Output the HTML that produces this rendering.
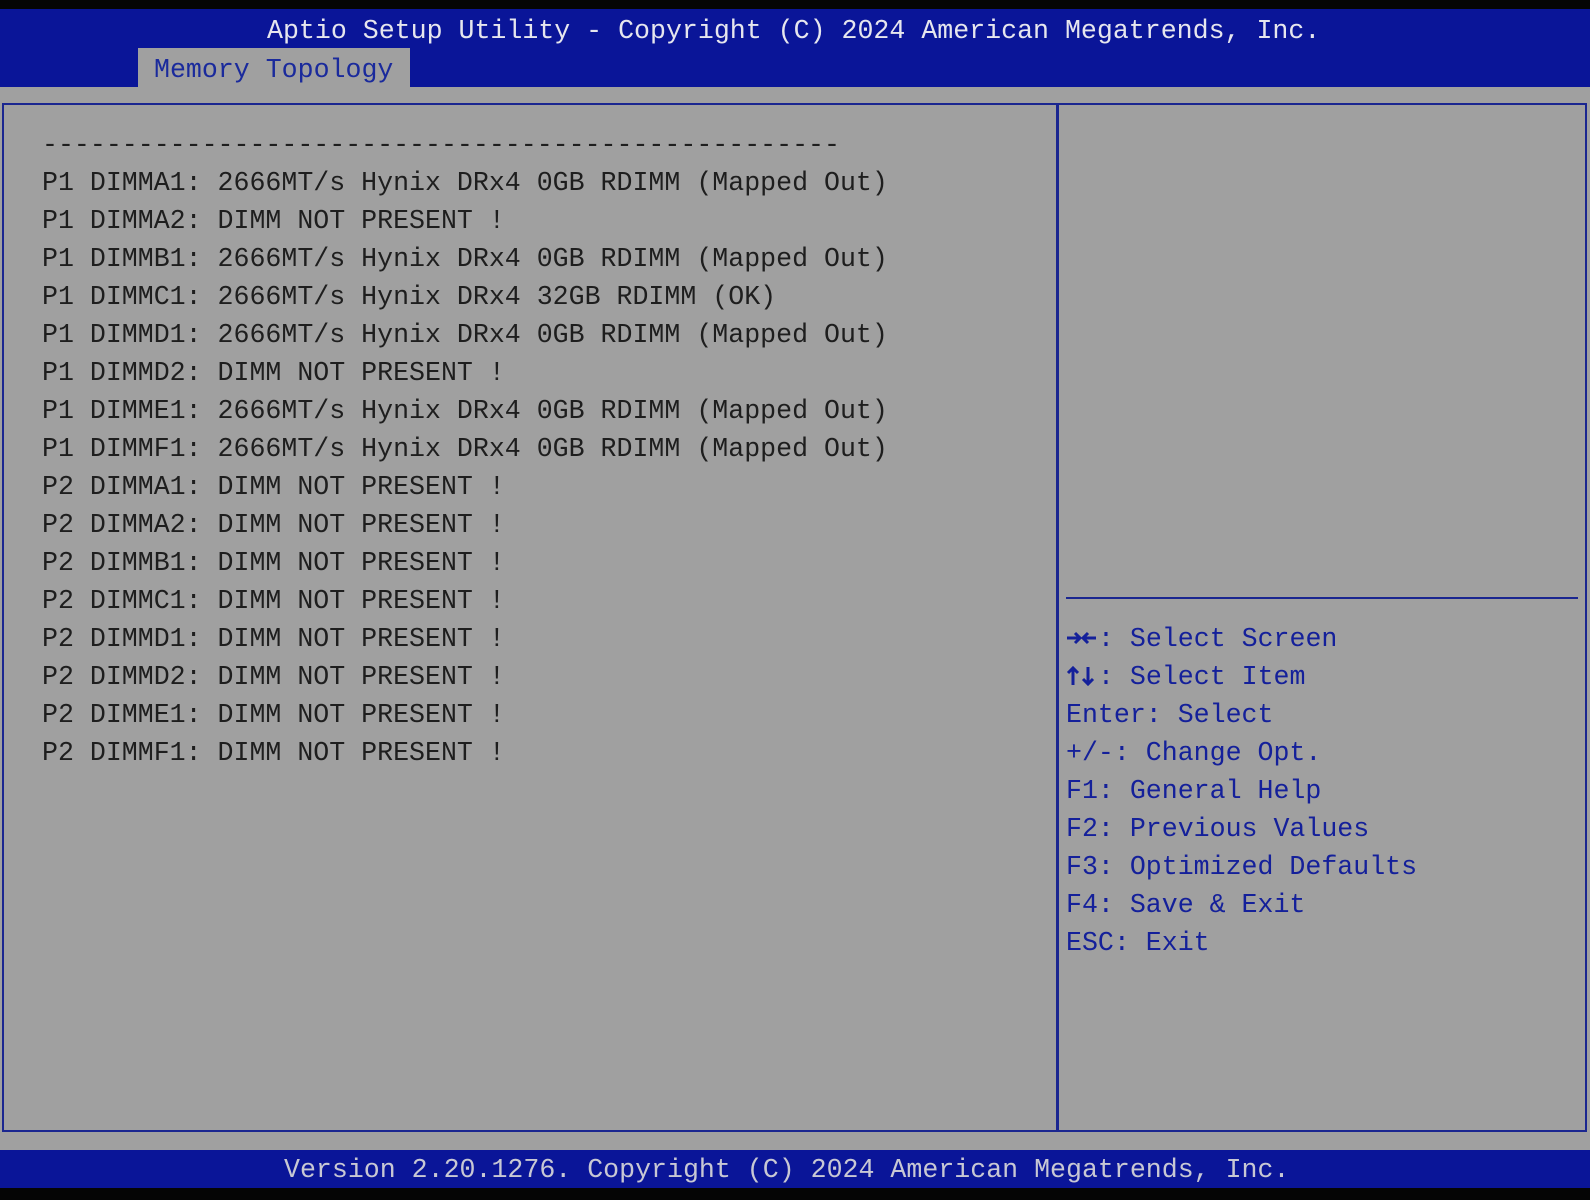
<!DOCTYPE html>
<html><head><meta charset="utf-8"><style>
html,body{margin:0;padding:0;width:1590px;height:1200px;overflow:hidden;background:#a0a0a0;}
*{box-sizing:border-box;}
.t{position:absolute;font-family:"Liberation Mono","DejaVu Sans Mono",monospace;font-size:26.6px;white-space:pre;line-height:38px;}
#top{position:absolute;left:0;top:0;width:1590px;height:9px;background:#050505;}
#hdr{position:absolute;left:0;top:9px;width:1590px;height:78px;background:#0a1598;}
#tab{position:absolute;left:138px;top:48px;width:272px;height:39px;background:#a0a0a0;}
#box{position:absolute;left:2px;top:103px;width:1585px;height:1029px;border:2px solid #1a2690;}
#vdiv{position:absolute;left:1056px;top:104px;width:3px;height:1027px;background:#1a2690;}
#hdiv{position:absolute;left:1066px;top:597px;width:512px;height:2px;background:#1a2690;}
#ftr{position:absolute;left:0;top:1150px;width:1590px;height:38px;background:#0a1598;}
#bot{position:absolute;left:0;top:1188px;width:1590px;height:12px;background:#050505;}
.main{color:#1e1e1e;left:42px;}
.help{color:#14209a;left:1066px;}
.ic{display:inline-block;width:32px;height:20px;vertical-align:-2px;}
</style></head><body>
<div id="top"></div>
<div id="hdr"></div>
<div id="tab"></div>
<div class="t" style="left:267px;top:12px;color:#e6e6ee;font-size:26.6px;">Aptio Setup Utility - Copyright (C) 2024 American Megatrends, Inc.</div>
<div class="t" style="left:154px;top:51px;color:#1a2a9c;font-size:26.6px;">Memory Topology</div>
<div id="box"></div>
<div id="vdiv"></div>
<div id="hdiv"></div>
<div class="t main" style="top:126px;">--------------------------------------------------</div>
<div class="t main" style="top:164px;">P1 DIMMA1: 2666MT/s Hynix DRx4 0GB RDIMM (Mapped Out)
P1 DIMMA2: DIMM NOT PRESENT !
P1 DIMMB1: 2666MT/s Hynix DRx4 0GB RDIMM (Mapped Out)
P1 DIMMC1: 2666MT/s Hynix DRx4 32GB RDIMM (OK)
P1 DIMMD1: 2666MT/s Hynix DRx4 0GB RDIMM (Mapped Out)
P1 DIMMD2: DIMM NOT PRESENT !
P1 DIMME1: 2666MT/s Hynix DRx4 0GB RDIMM (Mapped Out)
P1 DIMMF1: 2666MT/s Hynix DRx4 0GB RDIMM (Mapped Out)
P2 DIMMA1: DIMM NOT PRESENT !
P2 DIMMA2: DIMM NOT PRESENT !
P2 DIMMB1: DIMM NOT PRESENT !
P2 DIMMC1: DIMM NOT PRESENT !
P2 DIMMD1: DIMM NOT PRESENT !
P2 DIMMD2: DIMM NOT PRESENT !
P2 DIMME1: DIMM NOT PRESENT !
P2 DIMMF1: DIMM NOT PRESENT !</div>
<div class="t help" style="top:620px;"><svg class="ic" viewBox="0 0 32 20"><g fill="none" stroke="#14209a" stroke-width="3"><path d="M1 10H13M9 5l5 5-5 5"/><path d="M17 10H30M22 5l-5 5 5 5"/></g></svg>: Select Screen
<svg class="ic" viewBox="0 0 32 20"><g fill="none" stroke="#14209a" stroke-width="3"><path d="M7 19V2M2 7l5-5 5 5"/><path d="M22 1V18M17 13l5 5 5-5"/></g></svg>: Select Item
Enter: Select
+/-: Change Opt.
F1: General Help
F2: Previous Values
F3: Optimized Defaults
F4: Save &amp; Exit
ESC: Exit</div>
<div id="ftr"></div>
<div id="bot"></div>
<div class="t" style="left:284px;top:1151px;color:#c8c8d4;font-size:26.6px;">Version 2.20.1276. Copyright (C) 2024 American Megatrends, Inc.</div>
</body></html>
